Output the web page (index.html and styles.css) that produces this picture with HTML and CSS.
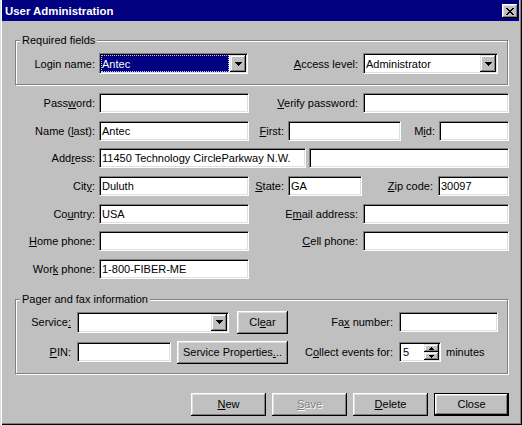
FILE: index.html
```html
<!DOCTYPE html>
<html>
<head>
<meta charset="utf-8">
<title>User Administration</title>
<link rel="stylesheet" href="styles.css">
</head>
<body>
<div class="window">
  <div class="titlebar">
    <span class="title">User Administration</span>
    <span class="close-btn"><svg width="8" height="7" viewBox="0 0 8 7" shape-rendering="crispEdges"><path d="M0 0h2v1H0zM6 0h2v1H6zM1 1h2v1H1zM5 1h2v1H5zM2 2h4v1H2zM3 3h2v1H3zM2 4h4v1H2zM1 5h2v1H1zM5 5h2v1H5zM0 6h2v1H0zM6 6h2v1H6z" fill="#000"/></svg></span>
  </div>

  <div class="group group-req">
    <div class="legend">Required fields</div>
    <div class="row row-combo">
      <span class="lbl w80">Login name:</span>
      <div class="combo ml3 w149">
        <span class="combo-text sel">Antec</span>
        <span class="drop"><svg width="7" height="4" viewBox="0 0 7 4" shape-rendering="crispEdges"><path d="M0 0h7v1H0zM1 1h5v1H1zM2 2h3v1H2zM3 3h1v1H3z" fill="#000"/></svg></span>
      </div>
      <span class="lbl w111"><u>A</u>ccess level:</span>
      <div class="combo ml4 w135">
        <span class="combo-text">Administrator</span>
        <span class="drop"><svg width="7" height="4" viewBox="0 0 7 4" shape-rendering="crispEdges"><path d="M0 0h7v1H0zM1 1h5v1H1zM2 2h3v1H2zM3 3h1v1H3z" fill="#000"/></svg></span>
      </div>
    </div>
  </div>

  <div class="form">
    <div class="row">
      <span class="lbl w96">Pass<u>w</u>ord:</span>
      <div class="field ml3 w150"></div>
      <span class="lbl w110"><u>V</u>erify password:</span>
      <div class="field ml4 w146"></div>
    </div>
    <div class="row">
      <span class="lbl w96">Name (<u>l</u>ast):</span>
      <div class="field ml3 w150">Antec</div>
      <span class="lbl w36"><u>F</u>irst:</span>
      <div class="field ml3 w113"></div>
      <span class="lbl w35">M<u>i</u>d:</span>
      <div class="field ml3 w70"></div>
    </div>
    <div class="row">
      <span class="lbl w96">Add<u>r</u>ess:</span>
      <div class="field ml3 w207">11450 Technology CircleParkway N.W.</div>
      <div class="field ml3 w200"></div>
    </div>
    <div class="row">
      <span class="lbl w96">Cit<u>y</u>:</span>
      <div class="field ml3 w150">Duluth</div>
      <span class="lbl w36"><u>S</u>tate:</span>
      <div class="field ml3 w74">GA</div>
      <span class="lbl w72"><u>Z</u>ip code:</span>
      <div class="field ml4 w71">30097</div>
    </div>
    <div class="row">
      <span class="lbl w96">Co<u>u</u>ntry:</span>
      <div class="field ml3 w150">USA</div>
      <span class="lbl w110">E<u>m</u>ail address:</span>
      <div class="field ml4 w146"></div>
    </div>
    <div class="row">
      <span class="lbl w96"><u>H</u>ome phone:</span>
      <div class="field ml3 w150"></div>
      <span class="lbl w110"><u>C</u>ell phone:</span>
      <div class="field ml4 w146"></div>
    </div>
    <div class="row">
      <span class="lbl w96">Wor<u>k</u> phone:</span>
      <div class="field ml3 w150">1-800-FIBER-ME</div>
    </div>
  </div>

  <div class="group group-pager">
    <div class="legend">Pager and fax information</div>
    <div class="row row-btn">
      <span class="lbl w56">Service<u>:</u></span>
      <div class="combo ml5 w152">
        <span class="combo-text"></span>
        <span class="drop"><svg width="7" height="4" viewBox="0 0 7 4" shape-rendering="crispEdges"><path d="M0 0h7v1H0zM1 1h5v1H1zM2 2h3v1H2zM3 3h1v1H3z" fill="#000"/></svg></span>
      </div>
      <span class="btn ml8 w51">Cl<u>e</u>ar</span>
      <span class="lbl w106">Fa<u>x</u> number:</span>
      <div class="field ml5 w99"></div>
    </div>
    <div class="row row-btn row-gap">
      <span class="lbl w56"><u>P</u>IN:</span>
      <div class="field ml5 w94"></div>
      <span class="btn ml6 w111">Service Properties<u>.</u>..</span>
      <span class="lbl w106">C<u>o</u>llect events for:</span>
      <div class="field spin ml5 w42">
        <span class="spin-val">5</span>
        <span class="spin-btns">
          <span class="spin-b"><svg width="5" height="3" viewBox="0 0 5 3" shape-rendering="crispEdges"><path d="M2 0h1v1H2zM1 1h3v1H1zM0 2h5v1H0z" fill="#000"/></svg></span>
          <span class="spin-b"><svg width="5" height="3" viewBox="0 0 5 3" shape-rendering="crispEdges"><path d="M0 0h5v1H0zM1 1h3v1H1zM2 2h1v1H2z" fill="#000"/></svg></span>
        </span>
      </div>
      <span class="unit">minutes</span>
    </div>
  </div>

  <div class="buttons">
    <span class="btn w75"><u>N</u>ew</span>
    <span class="btn w75 disabled"><u>S</u>ave</span>
    <span class="btn w75"><u>D</u>elete</span>
    <span class="btn w75 default">Close</span>
  </div>
</div>
</body>
</html>
```

FILE: styles.css
```css
* { box-sizing: border-box; }
html, body { margin: 0; padding: 0; background: #c0c0c0; }
body {
  font-family: "Liberation Sans", Arial, sans-serif;
  font-size: 11px;
  color: #000;
}
u { text-decoration: underline; text-underline-offset: 1px; }

.window {
  width: 522px;
  height: 425px;
  background: #c0c0c0;
  overflow: hidden;
  box-shadow: inset 1px 0 #dfdfdf, inset 2px 0 #fff, inset -1px -1px #000, inset -2px -2px #808080;
}

.titlebar {
  margin: 0 3px 0 2px;
  height: 21px;
  background: #000080;
  color: #fff;
  font-weight: bold;
  display: flex;
  align-items: center;
  justify-content: space-between;
  padding: 1px 1px 0 3px;
}
.title { line-height: 13px; font-size: 11.4px; }
.close-btn {
  width: 16px;
  height: 14px;
  background: #c0c0c0;
  display: flex;
  align-items: center;
  justify-content: center;
  box-shadow: inset -1px -1px #000, inset 1px 1px #fff, inset -2px -2px #808080, inset 2px 2px #dfdfdf;
}
.close-btn svg { display: block; margin-left: -1px; }

.group {
  margin-left: 15px;
  width: 493px;
  border: 1px solid #808080;
  box-shadow: inset 1px 1px #fff, 1px 1px #fff;
}
.legend {
  width: fit-content;
  margin: -7px 0 0 4px;
  padding: 0 2px;
  line-height: 13px;
  height: 13px;
  background: #c0c0c0;
}
.group-req { margin-top: 19px; padding-bottom: 10px; }
.group-req .row { margin-top: 6px; }
.group-pager { margin-top: 20px; padding-bottom: 9px; }
.group-pager .row { margin-top: 5px; }
.group-pager .row.row-gap { margin-top: 7px; }

.row {
  display: flex;
  align-items: center;
  height: 20px;
}
.row-combo { height: 21px; }
.row-btn { height: 23px; }

.form {
  margin-top: 8px;
  display: flex;
  flex-direction: column;
  gap: 7.67px;
}

.lbl {
  flex: none;
  text-align: right;
  white-space: nowrap;
  padding-right: 1px;
}
.unit { margin-left: 5px; }

.field {
  flex: none;
  height: 20px;
  background: #fff;
  border: 1px solid;
  border-color: #808080 #fff #fff #808080;
  box-shadow: inset 1px 1px #000, inset -1px -1px #dfdfdf;
  padding: 0 2px;
  display: flex;
  align-items: center;
  white-space: nowrap;
  overflow: hidden;
}

.combo {
  flex: none;
  height: 21px;
  background: #fff;
  border: 1px solid;
  border-color: #808080 #fff #fff #808080;
  box-shadow: inset 1px 1px #000, inset -1px -1px #dfdfdf;
  padding: 1px;
  display: flex;
}
.combo-text {
  flex: 1;
  display: flex;
  align-items: center;
  padding-left: 1px;
  margin-right: 1px;
  white-space: nowrap;
}
.combo-text.sel {
  background: #000080;
  color: #fff;
  outline: 1px dotted #c0c0ff;
  outline-offset: -1px;
}
.drop, .spin-b {
  flex: none;
  background: #c0c0c0;
  display: flex;
  align-items: center;
  justify-content: center;
  box-shadow: inset -1px -1px #000, inset 1px 1px #dfdfdf, inset -2px -2px #808080, inset 2px 2px #fff;
}
.drop { width: 16px; }
.drop svg, .spin-b svg { display: block; }

.spin { padding: 1px 1px 1px 2px; align-items: stretch; }
.spin-val { flex: 1; display: flex; align-items: center; padding-left: 1px; }
.spin-btns { width: 15px; display: flex; flex-direction: column; }
.spin-b { flex: 1; }

.btn {
  flex: none;
  height: 23px;
  background: #c0c0c0;
  display: flex;
  align-items: center;
  justify-content: center;
  white-space: nowrap;
  box-shadow: inset -1px -1px #000, inset 1px 1px #fff, inset -2px -2px #808080, inset 2px 2px #dfdfdf;
}
.btn.default { border: 1px solid #000; }
.btn.disabled { color: #808080; text-shadow: 1px 1px #fff; }

.buttons {
  margin: 19px 0 0 191px;
  display: flex;
  gap: 6px;
}

.ml3 { margin-left: 3px; }
.ml4 { margin-left: 4px; }
.ml5 { margin-left: 5px; }
.ml6 { margin-left: 6px; }
.ml8 { margin-left: 8px; }

.w35 { width: 35px; }
.w36 { width: 36px; }
.w42 { width: 42px; }
.w51 { width: 51px; }
.w56 { width: 56px; }
.w70 { width: 70px; }
.w71 { width: 71px; }
.w72 { width: 72px; }
.w74 { width: 74px; }
.w75 { width: 75px; }
.w80 { width: 80px; }
.w94 { width: 94px; }
.w96 { width: 96px; }
.w99 { width: 99px; }
.w106 { width: 106px; }
.w110 { width: 110px; }
.w111 { width: 111px; }
.w113 { width: 113px; }
.w135 { width: 135px; }
.w146 { width: 146px; }
.w149 { width: 149px; }
.w150 { width: 150px; }
.w152 { width: 152px; }
.w200 { width: 200px; }
.w207 { width: 207px; }
```
